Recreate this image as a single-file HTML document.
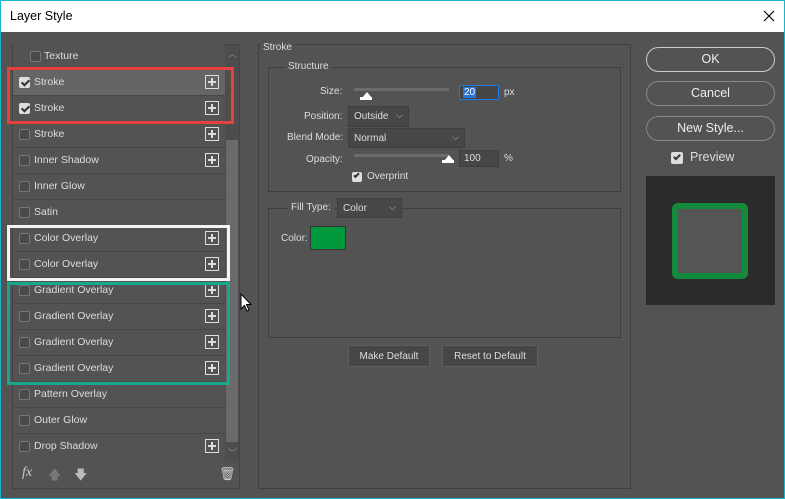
<!DOCTYPE html><html><head><style>
*{box-sizing:border-box;margin:0;padding:0}
body{width:785px;height:499px;overflow:hidden;background:#535353;font-family:"Liberation Sans",sans-serif;font-size:11px;color:#ddd;position:relative;border:1px solid #1ab4c8}
.a{position:absolute}
.title{left:0;top:0;width:783px;height:31px;background:#fff;color:#000;font-size:12.5px;padding:8px 0 0 9px}
.row{position:absolute;left:12px;width:212px;height:26px;border-bottom:1px solid #474747;background:#535353}
.row .cb{position:absolute;left:6px;top:7px;width:11px;height:11px;border:1px solid #777;border-radius:2px;background:#4a4a4a}
.row .cb.on{background:#ddd;border-color:#ddd}
.row .cb.on:after{content:"";position:absolute;left:3px;top:0px;width:3px;height:6px;border:solid #333;border-width:0 2px 2px 0;transform:rotate(45deg)}
.row span{position:absolute;left:21px;top:6px;font-size:10.5px}
.plus{position:absolute;left:192px;top:5px;width:14px;height:14px;border:1px solid #ddd}
.plus:before{content:"";position:absolute;left:2px;top:5px;width:8px;height:2px;background:#ddd}
.plus:after{content:"";position:absolute;left:5px;top:2px;width:2px;height:8px;background:#ddd}
.box{position:absolute;border:1px solid #3f3f3f}
.lbl{position:absolute;font-size:10px;background:#535353;padding:0 3px}
.sel{position:absolute;background:#474747;border:1px solid #3e3e3e;font-size:10px;padding:4px 5px}
.sel i{position:absolute;right:5px;top:3px;font-style:normal;font-size:9px;color:#bbb}
.btn{position:absolute;border:1px solid #888;border-radius:13px;text-align:center;font-size:12.5px;padding-top:4px;height:25px;color:#eee}
.pb{position:absolute;background:#464646;border:1px solid #5e5e5e;font-size:10px;text-align:center;padding-top:5px;height:22px}
</style></head><body>
<div class="a title">Layer Style<svg class="a" style="left:762px;top:9px" width="12" height="12"><path d="M1 1L11 11M11 1L1 11" stroke="#000" stroke-width="1.2"/></svg></div>
<div class="box" style="left:11px;top:43px;width:228px;height:445px;border-color:#444"></div>
<div class="a" style="left:224px;top:44px;width:14px;height:416px;background:#4d4d4d"></div>
<div class="a" style="left:225px;top:139px;width:12px;height:302px;background:#6a6a6a"></div>
<div class="a" style="left:227px;top:46px;font-size:9px;color:#888">︿</div>
<div class="a" style="left:227px;top:445px;font-size:9px;color:#888">﹀</div>
<div class="row" style="top:43px"><div class="cb" style="left:17px"></div><span style="left:31px">Texture</span></div>
<div class="row" style="top:69px;background:#656565"><div class="cb on"></div><span>Stroke</span><div class="plus"></div></div>
<div class="row" style="top:95px"><div class="cb on"></div><span>Stroke</span><div class="plus"></div></div>
<div class="row" style="top:121px"><div class="cb"></div><span>Stroke</span><div class="plus"></div></div>
<div class="row" style="top:147px"><div class="cb"></div><span>Inner Shadow</span><div class="plus"></div></div>
<div class="row" style="top:173px"><div class="cb"></div><span>Inner Glow</span></div>
<div class="row" style="top:199px"><div class="cb"></div><span>Satin</span></div>
<div class="row" style="top:225px"><div class="cb"></div><span>Color Overlay</span><div class="plus"></div></div>
<div class="row" style="top:251px"><div class="cb"></div><span>Color Overlay</span><div class="plus"></div></div>
<div class="row" style="top:277px"><div class="cb"></div><span>Gradient Overlay</span><div class="plus"></div></div>
<div class="row" style="top:303px"><div class="cb"></div><span>Gradient Overlay</span><div class="plus"></div></div>
<div class="row" style="top:329px"><div class="cb"></div><span>Gradient Overlay</span><div class="plus"></div></div>
<div class="row" style="top:355px"><div class="cb"></div><span>Gradient Overlay</span><div class="plus"></div></div>
<div class="row" style="top:381px"><div class="cb"></div><span>Pattern Overlay</span></div>
<div class="row" style="top:407px"><div class="cb"></div><span>Outer Glow</span></div>
<div class="row" style="top:433px;border:none"><div class="cb"></div><span>Drop Shadow</span><div class="plus"></div></div>
<div class="a" style="left:21px;top:464px;font-size:14px;font-style:italic;font-family:'Liberation Serif',serif;color:#ccc">fx</div>
<div class="a" style="left:47px;top:465px;font-size:13px;color:#777">🡅</div>
<div class="a" style="left:73px;top:465px;font-size:13px;color:#bbb">🡇</div>
<div class="a" style="left:218px;top:465px;font-size:13px;color:#ccc">🗑</div>
<div class="a" style="left:6px;top:66px;width:227px;height:57px;border:3px solid #e8403f"></div>
<div class="a" style="left:6px;top:224px;width:223px;height:56px;border:3px solid #f4f4f4"></div>
<div class="a" style="left:6px;top:281px;width:223px;height:103px;border:3px solid #17a88c"></div>
<svg class="a" style="left:239px;top:292px" width="12" height="20"><path d="M1 1L1 16L4.5 12.5L7 18L9 17L6.5 11.5L11 11.5Z" fill="#fff" stroke="#000" stroke-width="1"/></svg>
<div class="box" style="left:257px;top:43px;width:373px;height:445px"></div>
<div class="lbl" style="left:259px;top:41px">Stroke</div>
<div class="box" style="left:267px;top:66px;width:353px;height:125px"></div>
<div class="lbl" style="left:284px;top:60px">Structure</div>
<div class="a" style="left:319px;top:85px;font-size:10px">Size:</div>
<div class="a" style="left:353px;top:87px;width:95px;height:3px;background:#6c6c6c"></div>
<div class="a" style="left:361px;top:91px;width:0;height:0;border:5px solid transparent;border-bottom:6px solid #fff;border-top:0"></div>
<div class="a" style="left:359px;top:96px;width:12px;height:3px;background:#fff"></div>
<div class="a" style="left:458px;top:84px;width:40px;height:15px;background:#454545;border:1px solid #1e7ae0"></div>
<div class="a" style="left:462px;top:86px;background:#2a73d8;color:#fff;font-size:10px;padding:0 1px">20</div>
<div class="a" style="left:503px;top:86px;font-size:10px">px</div>
<div class="a" style="left:303px;top:110px;font-size:10px">Position:</div>
<div class="sel" style="left:347px;top:105px;width:61px;height:21px">Outside<i>⌵</i></div>
<div class="a" style="left:286px;top:131px;font-size:10px">Blend Mode:</div>
<div class="sel" style="left:347px;top:127px;width:117px;height:20px">Normal<i>⌵</i></div>
<div class="a" style="left:305px;top:153px;font-size:10px">Opacity:</div>
<div class="a" style="left:353px;top:153px;width:95px;height:3px;background:#6c6c6c"></div>
<div class="a" style="left:443px;top:154px;width:0;height:0;border:5px solid transparent;border-bottom:6px solid #fff;border-top:0"></div>
<div class="a" style="left:441px;top:159px;width:12px;height:3px;background:#fff"></div>
<div class="a" style="left:458px;top:149px;width:40px;height:17px;background:#474747;border:1px solid #3e3e3e;font-size:10px;padding:2px 4px">100</div>
<div class="a" style="left:503px;top:152px;font-size:10px">%</div>
<div class="a" style="left:351px;top:171px;width:10px;height:10px;background:#ddd;border-radius:2px"></div>
<div class="a" style="left:354px;top:171px;width:3px;height:6px;border:solid #333;border-width:0 2px 2px 0;transform:rotate(45deg)"></div>
<div class="a" style="left:366px;top:170px;font-size:10px">Overprint</div>
<div class="box" style="left:267px;top:207px;width:353px;height:130px"></div>
<div class="lbl" style="left:287px;top:201px">Fill Type:</div>
<div class="sel" style="left:336px;top:197px;width:65px;height:20px">Color<i>⌵</i></div>
<div class="a" style="left:280px;top:232px;font-size:10px">Color:</div>
<div class="a" style="left:309px;top:225px;width:36px;height:24px;background:#009a3e;border:1px solid #333"></div>
<div class="pb" style="left:347px;top:344px;width:82px">Make Default</div>
<div class="pb" style="left:441px;top:344px;width:96px">Reset to Default</div>
<div class="btn" style="left:645px;top:46px;width:129px;border-color:#ccc">OK</div>
<div class="btn" style="left:645px;top:80px;width:129px">Cancel</div>
<div class="btn" style="left:645px;top:115px;width:129px">New Style...</div>
<div class="a" style="left:670px;top:151px;width:12px;height:12px;background:#ddd;border-radius:2px"></div>
<div class="a" style="left:674px;top:152px;width:4px;height:7px;border:solid #333;border-width:0 2px 2px 0;transform:rotate(45deg)"></div>
<div class="a" style="left:689px;top:149px;font-size:12.5px">Preview</div>
<div class="a" style="left:645px;top:175px;width:129px;height:129px;background:#2b2b2b"></div>
<div class="a" style="left:671px;top:202px;width:76px;height:76px;border:6px solid #138a3c;border-radius:6px;background:#555"></div>
</body></html>
